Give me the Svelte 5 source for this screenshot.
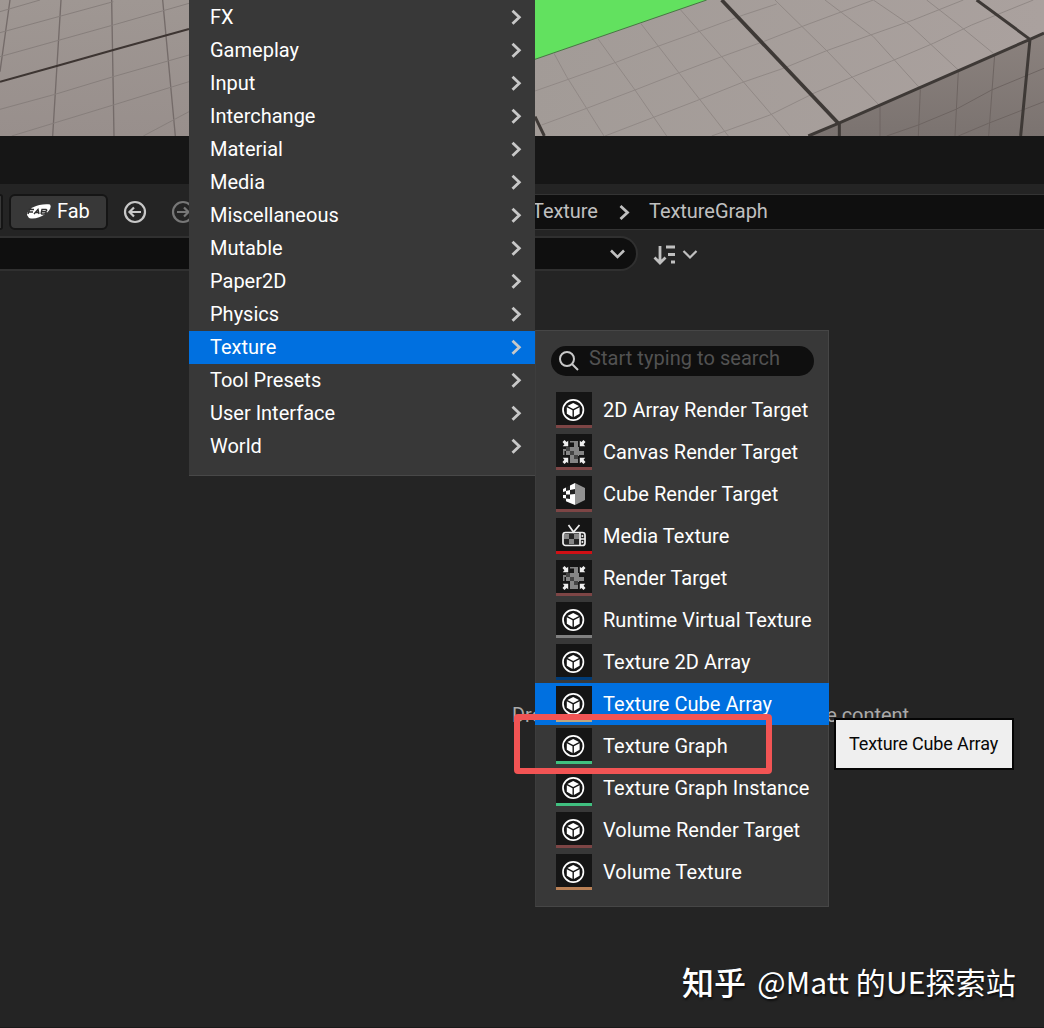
<script>
  const categories = ['FX', 'Gameplay', 'Input', 'Interchange', 'Material', 'Media', 'Miscellaneous', 'Mutable', 'Paper2D', 'Physics', 'Texture', 'Tool Presets', 'User Interface', 'World'];
  const assets = [
    ['2D Array Render Target', 'cube', 'maroon'],
    ['Canvas Render Target', 'canvas', 'maroon'],
    ['Cube Render Target', 'solid', 'maroon'],
    ['Media Texture', 'media', 'red'],
    ['Render Target', 'canvas', 'maroon'],
    ['Runtime Virtual Texture', 'cube', 'gray'],
    ['Texture 2D Array', 'cube', 'navy'],
    ['Texture Cube Array', 'cube', 'tan'],
    ['Texture Graph', 'cube', 'green'],
    ['Texture Graph Instance', 'cube', 'green'],
    ['Volume Render Target', 'cube', 'maroon'],
    ['Volume Texture', 'cube', 'orange']
  ];
</script>

<main>
  <svg class="viewport" viewBox="0 0 1044 136">
    <defs>
      <linearGradient id="floor" x2="0" y2="1"><stop stop-color="#9f9793" /><stop offset="1" stop-color="#988f8c" /></linearGradient>
      <linearGradient id="top" x2="1"><stop stop-color="#a29b97" /><stop offset="1" stop-color="#aaa19e" /></linearGradient>
      <linearGradient id="side" x2="0" y2="1"><stop stop-color="#8b827e" /><stop offset="1" stop-color="#7b7370" /></linearGradient>
    </defs>
    <rect width="190" height="136" fill="url(#floor)" />
    <rect x="530" width="514" height="136" fill="url(#top)" />
    <g transform="scale(.33333)" fill="none" stroke="#877e7b" stroke-width="3">
      <path d="M30 0 0 215M183 0 158 408M335 0 342 408M488 0 526 408" stroke="#746b69" stroke-width="4" />
      <path d="M0 35 120 0M0 98 340 5M0 170 340 75 567 10M0 328 165 283 340 230 567 165M35 408 340 315 567 245M430 408 567 335" />
      <path d="M0 245 170 198 340 150 567 87" stroke="#3d3532" stroke-width="6" />
    </g>
    <g transform="translate(530 0) scale(.33333)" fill="none" stroke="#918986" stroke-width="3">
      <path d="M15 0H530L15 178Z" fill="#62e15f" stroke="none" />
      <path d="M530 0 15 178" stroke="#477543" />
      <path d="M835 408 925 370 1500 118 1542 99V408Z" fill="url(#side)" stroke="none" />
      <path d="M72 160 110 230 222 408M203 115 315 270 410 408M332 70 448 220 595 408M452 30 575 170 780 408M735 0 888 150 1050 318M885 0 1030 110 1170 265M1030 0 1140 75 1285 210M1190 0 1280 70 1390 160" />
      <path d="M15 273 115 238 255 188 375 142 500 97 640 45 740 12M35 375 170 325 315 270 448 218 575 170 700 125 820 78 1030 0M225 408 350 360 500 302 635 248 760 205 890 152 1022 105 1150 60 1300 0M545 408 720 345 855 278 970 230 1085 183 1210 130 1325 75 1510 0" />
      <path d="M1050 320V408M1171 268 1165 408M1285 215 1275 408M1394 165 1376 408M1070 408 1165 375 1278 328 1385 270 1542 205M1285 408 1375 370 1542 305" stroke="#6d6461" />
      <path d="M575 0 925 370" stroke="#3e3936" stroke-width="11" />
      <path d="M835 408 925 370 1500 118 1542 99M1340 0 1500 118M928 370V408M1500 118 1472 408M15 350 43 408" stroke="#3e3936" stroke-width="9" />
    </g>
  </svg>
  <div class="panel-gap"></div>
  <div class="toolbar">
    <div class="edge-button"></div>
    <div class="fab">
      <svg width="26" height="20" viewBox="0 0 26 20"><path d="M1 14C1 7 14 2 24 3.5 28 9 13 20 3 17Z" fill="#fff" /><g fill="none" stroke="#303030" stroke-width="1.4"><path d="M2 13 3.5 8.5H8M3 11H7M8 13 12 8.5 13 13M10 11.5H13M15 13 16 8.5H20Q22 9.5 19 10.8 22 12 18 13H15M16 10.8H19" /></g></svg>
      <span>Fab</span>
    </div>
    <svg class="nav" viewBox="0 0 24 24"><circle cx="12" cy="12" r="10" /><path d="M18 12H7M11 7.5 6.5 12 11 16.5" /></svg>
    <svg class="nav dim" viewBox="0 0 24 24"><circle cx="12" cy="12" r="10" /><path d="M6 12H17M13 7.5 17.5 12 13 16.5" /></svg>
    <div class="crumbs"><span class="crumb">Texture</span><svg width="12" height="18" viewBox="0 0 12 18"><path d="M1.5 3 8.5 9.5 1.5 16" /></svg><span class="crumb second">TextureGraph</span></div>
  </div>
  <div class="filters">
    <div class="field"><svg width="18" height="12" viewBox="0 0 18 12"><path d="M3 2.5 9.5 9 16 2.5" /></svg></div>
    <svg class="sort" width="46" height="24" viewBox="0 0 46 24"><path d="M7 3V20M1.5 14.5 7 20 12.5 14.5M13 4H22M15 11.5H22M18 19H22" stroke-width="2.8" /><path d="M30.5 8 37 14.5 43.5 8" stroke-width="2.2" /></svg>
  </div>
  <div class="content"><p>Drop files here or right click to create content.</p></div>

  <nav class="menu">
    {#each categories as name}
      <div class="item" class:active={name === 'Texture'}><span>{name}</span><svg width="12" height="16" viewBox="0 0 12 16"><path d="M1.5 1.8 8.3 8.3 1.5 14.8" /></svg></div>
    {/each}
  </nav>

  <section class="submenu">
    <div class="search"><svg width="22" height="22" viewBox="0 0 22 22"><circle cx="9" cy="9" r="7" /><path d="M14 14 20 20" /></svg><span>Start typing to search</span></div>
    {#each assets as [name, icon, color]}
      <div class="asset" class:active={name === 'Texture Cube Array'}>
        <div class="thumb {color}">
          <svg width="36" height="36" viewBox="0 0 36 36">
            {#if icon === 'cube'}
              <circle cx="17.2" cy="18" r="10.2" fill="none" stroke="#fff" stroke-width="1.7" />
              <path d="M17.2 11 23 14 17.2 17 11.4 14ZM10.8 15.2 16.5 18.2V25L10.8 21.8ZM23.6 15.2 17.9 18.2V25L23.6 21.8Z" fill="#fff" />
            {:else if icon === 'canvas'}
              <path d="M14 7H22V8.5H14ZM18 8H22V13H18ZM14 13H18V17H14ZM22 13H23V17H28V21H22V17H18V13H22ZM10 17H14V21H10ZM18 17H22V21H18ZM14 21H18V25H22V29H14ZM7 15H10V17H8.5V21H7ZM22 21H23V22H22Z" fill="#858585" />
              <path d="M14 17H18V21H14ZM10 13H14V17H10ZM18 21H22V25H18Z" fill="#444" />
              <g fill="#eee"><path d="M6.5 8 8.5 6 10.6 8 12.2 6.8V12.2H6.8L8.4 10.2ZM29.5 8 27.5 6 25.4 8 23.8 6.8V12.2H29.2L27.6 10.2ZM6.5 28 8.5 30 10.6 28 12.2 29.2V23.8H6.8L8.4 25.8ZM29.5 28 27.5 30 25.4 28 23.8 29.2V23.8H29.2L27.6 25.8Z" /></g>
            {:else if icon === 'solid'}
              <path d="M7 13 19 7V29L7 24Z" fill="#222" />
              <path d="M19 7 29 12V24L19 29Z" fill="#929292" />
              <path d="M14 9.5 19 7V13L14 14ZM7 13 10 11.4V15L7 16ZM10 15 14 14V18.5H10ZM14 18.5 19 18V24L14 23ZM7 19H10V22.5L7 22ZM10 22.5 14 23V27L10 25.3ZM19 23V29L14 27V23Z" fill="#fff" />
            {:else}
              <rect x="7" y="14.5" width="22" height="13" rx="2.5" fill="#252525" stroke="#eee" stroke-width="1.7" />
              <path d="M8 16H13V21H18V16H23V21H18V26H13V21H8Z" fill="#858585" />
              <path d="M12.5 7 17.5 14 23.5 7M24 15V27M24 21H29" fill="none" stroke="#eee" stroke-width="1.7" />
              <circle cx="26.4" cy="18" r="1" fill="#eee" /><circle cx="26.4" cy="24" r="1" fill="#eee" />
            {/if}
          </svg>
        </div>
        <span>{name}</span>
      </div>
    {/each}
  </section>
  <div class="tooltip">Texture Cube Array</div>
  <div class="callout"></div>
  <div class="watermark"><b>知乎</b><span>@Matt 的UE探索站</span></div>
</main>

<style>
  :global(body) { margin: 0; background: #242424; }
  main { position: relative; display: flex; flex-direction: column; width: 1044px; height: 1028px; overflow: hidden; background: #242424; font: 20px/24px Roboto, sans-serif; color: #fff; box-sizing: border-box; border-bottom: 1px solid #1a1a1a; }
  main * { box-sizing: border-box; }
  svg { display: block; flex: none; }
  span, p { white-space: nowrap; }
  .viewport { width: 1044px; height: 136px; }
  .panel-gap { height: 48px; background: #161616; flex: none; }
  .toolbar { height: 53px; display: flex; align-items: flex-start; padding-top: 10px; flex: none; }
  .edge-button { width: 3px; height: 36px; margin-right: 6px; border: 2px solid #151515; border-left: 0; border-radius: 0 5px 5px 0; background: #383838; }
  .fab { width: 99px; height: 36px; display: flex; align-items: center; padding: 0 0 2px 15px; gap: 5px; background: #383838; border: 2px solid #151515; border-radius: 6px; }
  .nav { width: 24px; height: 24px; margin: 6px 0 0 15px; fill: none; stroke: #c8c8c8; stroke-width: 2.2; }
  .dim { margin-left: 24px; stroke: #777; }
  .crumbs { flex: 1; height: 36px; margin-left: 10px; padding-left: 326px; display: flex; align-items: center; background: #0f0f0f; border: 1px solid #343434; border-right: 0; color: #c0c0c0; }
  .crumb { padding-bottom: 2px; width: 66px; letter-spacing: -.05px; }
  .crumbs svg { margin-left: 21px; }
  .crumbs path, .field path, .sort path { fill: none; stroke: #c0c0c0; }
  .crumbs path { stroke-width: 2.8; }
  .second { width: auto; margin-left: 18px; }
  .filters { display: flex; height: 35px; flex: none; }
  .field { width: 638px; height: 35px; margin-top: -1px; display: flex; align-items: center; justify-content: flex-end; padding-right: 10px; background: #0f0f0f; border: 2px solid #303030; border-left: 0; border-radius: 0 18px 18px 0; }
  .field path { stroke-width: 2.6; }
  .sort { margin: 6px 0 0 15px; }
  .content { flex: 1; padding: 431px 0 0 512px; color: #aaa; letter-spacing: -.04px; }
  p { margin: 0; }
  .menu { position: absolute; left: 189px; top: 0; width: 346px; height: 476px; padding-top: 1px; background: #383838; border-bottom: 1px solid #484848; }
  .item { height: 33px; display: flex; align-items: center; justify-content: space-between; padding: 0 12px 1px 21px; }
  .item path { fill: none; stroke: #c8c8c8; stroke-width: 2.8; }
  .active { background: #0070e0; }
  .submenu { position: absolute; left: 535px; top: 330px; width: 294px; height: 577px; padding-top: 15px; background: #383838; border: 1px solid #464646; border-left-color: #3d3d3d; }
  .search { width: 263px; height: 30px; margin: 0 0 13px 15px; padding-left: 7px; display: flex; align-items: center; background: #0f0f0f; border-radius: 15px; color: #525252; }
  .search svg { fill: none; stroke: #c8c8c8; stroke-width: 2; }
  .search span { margin: -6px 0 0 9px; letter-spacing: .05px; }
  .asset { height: 42px; margin: 0 -1px; display: flex; align-items: center; padding-left: 21px; letter-spacing: .03px; }
  .asset span { margin-left: 11px; }
  .thumb { width: 36px; height: 36px; background: #151515; border-bottom: 3px solid; }
  .maroon { border-color: #7d4545; } .red { border-color: #d01015; } .gray { border-color: #808080; } .navy { border-color: #003c78; } .tan { border-color: #bba57e; } .green { border-color: #40c080; } .orange { border-color: #b98055; }
  .tooltip { position: absolute; left: 834px; top: 718px; width: 180px; height: 52px; padding: 12px 0 0 13px; background: #efefef; border: 2px solid #050505; color: #080808; font-size: 18px; letter-spacing: -.14px; white-space: nowrap; }
  .callout { position: absolute; left: 514px; top: 714px; width: 258px; height: 60px; border: 6px solid #f25454; border-radius: 4px; }
  .watermark { position: absolute; left: 682px; top: 958px; display: flex; align-items: center; gap: 11px; font: 30px/46px "Noto Sans CJK SC", sans-serif; letter-spacing: .12px; white-space: nowrap; text-shadow: 1px 2px 2px #0009; }
  b { font-size: 32px; font-weight: 500; }
</style>
